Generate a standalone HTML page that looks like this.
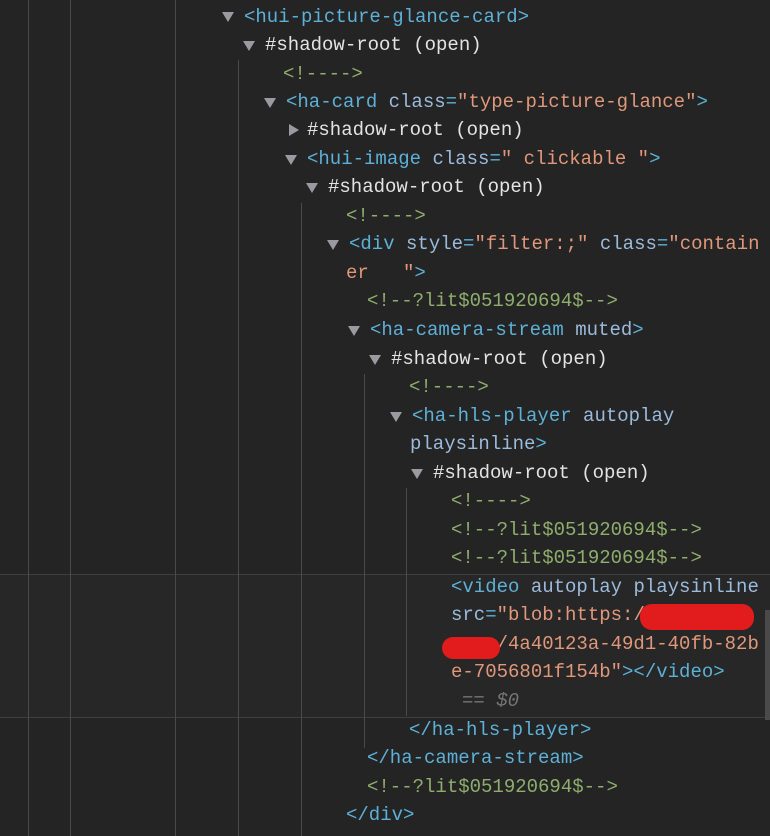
<!DOCTYPE html>
<html><head><style>
body{margin:0;width:770px;height:836px;background:#242424;overflow:hidden;position:relative;font-family:"Liberation Mono",monospace;font-size:19px;}
.l{position:absolute;white-space:pre;height:28px;line-height:28px;color:#e3e3e3;top:1px}
.t{color:#5db0d7}.a{color:#9bbbdc}.v{color:#e0977a}.c{color:#8fae6c}.g{color:#757575;font-style:italic}
.tri{position:absolute;width:0;height:0}
.d{border-left:6px solid transparent;border-right:6px solid transparent;border-top:10px solid #9a9aa0}
.r{border-top:6px solid transparent;border-bottom:6px solid transparent;border-left:10px solid #9a9aa0}
.vl{position:absolute;width:1px;background:#4a4a4a}
.sel{position:absolute;left:0;width:770px;top:574px;height:142px;background:#272727;border-top:1px solid #3e3e3e;border-bottom:1px solid #3e3e3e}
.red{position:absolute;background:#e21c1c;border-radius:12px}
</style></head><body>
<div class="sel"></div>
<div class="vl" style="left:28px;top:0;height:836px"></div>
<div class="vl" style="left:70px;top:0;height:836px"></div>
<div class="vl" style="left:175px;top:0;height:836px"></div>
<div class="vl" style="left:238px;top:60px;height:776px"></div>
<div class="vl" style="left:301px;top:203px;height:633px"></div>
<div class="vl" style="left:364px;top:374px;height:374px"></div>
<div class="vl" style="left:406px;top:488px;height:228px"></div>
<div style="position:absolute;left:765px;top:610px;width:5px;height:110px;background:#4a4a4a"></div>

<div class="tri d" style="left:222px;top:12px"></div><div class="l" style="left:244px;top:3px"><span class="t">&lt;hui-picture-glance-card&gt;</span></div>
<div class="tri d" style="left:243px;top:41px"></div><div class="l" style="left:265px;top:31px">#shadow-root (open)</div>
<div class="l" style="left:283px;top:60px"><span class="c">&lt;!----&gt;</span></div>
<div class="tri d" style="left:264px;top:98px"></div><div class="l" style="left:286px;top:88px"><span class="t">&lt;ha-card</span> <span class="a">class</span><span class="t">=</span><span class="v">"type-picture-glance"</span><span class="t">&gt;</span></div>
<div class="tri r" style="left:289px;top:124px"></div><div class="l" style="left:307px;top:116px">#shadow-root (open)</div>
<div class="tri d" style="left:285px;top:155px"></div><div class="l" style="left:307px;top:145px"><span class="t">&lt;hui-image</span> <span class="a">class</span><span class="t">=</span><span class="v">" clickable "</span><span class="t">&gt;</span></div>
<div class="tri d" style="left:306px;top:183px"></div><div class="l" style="left:328px;top:173px">#shadow-root (open)</div>
<div class="l" style="left:346px;top:202px"><span class="c">&lt;!----&gt;</span></div>
<div class="tri d" style="left:327px;top:240px"></div><div class="l" style="left:349px;top:230px"><span class="t">&lt;div</span> <span class="a">style</span><span class="t">=</span><span class="v">"filter:;"</span> <span class="a">class</span><span class="t">=</span><span class="v">"contain</span></div>
<div class="l" style="left:346px;top:259px"><span class="v">er   "</span><span class="t">&gt;</span></div>
<div class="l" style="left:367px;top:287px"><span class="c">&lt;!--?lit$051920694$--&gt;</span></div>
<div class="tri d" style="left:348px;top:326px"></div><div class="l" style="left:370px;top:316px"><span class="t">&lt;ha-camera-stream</span> <span class="a">muted</span><span class="t">&gt;</span></div>
<div class="tri d" style="left:369px;top:355px"></div><div class="l" style="left:391px;top:345px">#shadow-root (open)</div>
<div class="l" style="left:409px;top:373px"><span class="c">&lt;!----&gt;</span></div>
<div class="tri d" style="left:390px;top:412px"></div><div class="l" style="left:412px;top:402px"><span class="t">&lt;ha-hls-player</span> <span class="a">autoplay</span></div>
<div class="l" style="left:410px;top:430px"><span class="a">playsinline</span><span class="t">&gt;</span></div>
<div class="tri d" style="left:411px;top:469px"></div><div class="l" style="left:433px;top:459px">#shadow-root (open)</div>
<div class="l" style="left:451px;top:487px"><span class="c">&lt;!----&gt;</span></div>
<div class="l" style="left:451px;top:516px"><span class="c">&lt;!--?lit$051920694$--&gt;</span></div>
<div class="l" style="left:451px;top:544px"><span class="c">&lt;!--?lit$051920694$--&gt;</span></div>
<div class="l" style="left:451px;top:573px"><span class="t">&lt;video</span> <span class="a">autoplay playsinline</span></div>
<div class="l" style="left:451px;top:601px"><span class="a">src</span><span class="t">=</span><span class="v">"blob:https:/</span></div>
<div class="l" style="left:451px;top:630px"><span class="v">    /4a40123a-49d1-40fb-82b</span></div>
<div class="l" style="left:451px;top:658px"><span class="v">e-7056801f154b"</span><span class="t">&gt;&lt;/video&gt;</span></div>
<div class="l" style="left:462px;top:687px"><span class="g">== $0</span></div>
<div class="red" style="left:640px;top:604px;width:114px;height:26px"></div>
<div class="red" style="left:442px;top:637px;width:58px;height:22px"></div>
<div class="l" style="left:409px;top:716px"><span class="t">&lt;/ha-hls-player&gt;</span></div>
<div class="l" style="left:367px;top:744px"><span class="t">&lt;/ha-camera-stream&gt;</span></div>
<div class="l" style="left:367px;top:773px"><span class="c">&lt;!--?lit$051920694$--&gt;</span></div>
<div class="l" style="left:346px;top:801px"><span class="t">&lt;/div&gt;</span></div>
</body></html>
